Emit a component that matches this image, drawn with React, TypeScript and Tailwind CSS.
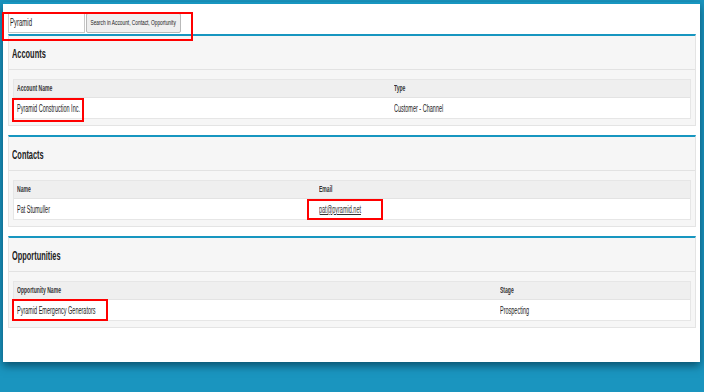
import React from 'react';

type Section = {
  title: string;
  cols: [string, string];
  firstWidth: string;
  row: [string, string];
  link?: boolean;
};

const SECTIONS: Section[] = [
  {
    title: 'Accounts',
    cols: ['Account Name', 'Type'],
    firstWidth: 'w-[377px]',
    row: ['Pyramid Construction Inc.', 'Customer - Channel'],
  },
  {
    title: 'Contacts',
    cols: ['Name', 'Email'],
    firstWidth: 'w-[302px]',
    row: ['Pat Stumuller', 'pat@pyramid.net'],
    link: true,
  },
  {
    title: 'Opportunities',
    cols: ['Opportunity Name', 'Stage'],
    firstWidth: 'w-[483px]',
    row: ['Pyramid Emergency Generators', 'Prospecting'],
  },
];

// the screenshot text is heavily condensed, so squeeze it horizontally
const Narrow: React.FC<{ children: React.ReactNode; className?: string }> = ({ children, className = '' }) => (
  <span className={`inline-block whitespace-nowrap origin-left leading-none ${className}`}>{children}</span>
);

const ResultPanel: React.FC<{ section: Section }> = ({ section }) => (
  <div className="bg-[#f6f6f6] border-t-2 border-[#1796c0] border-x border-b border-x-[#e4e4e4] border-b-[#e4e4e4]">
    <div className="h-[34px] flex items-center pl-[3px] pt-[1px] border-b border-[#e2e2e2]">
      <h3 className="text-[13px] font-bold text-[#222] leading-none">
        <Narrow className="scale-x-[0.57]">{section.title}</Narrow>
      </h3>
    </div>
    <div className="px-[4px] pt-[9px] pb-[6px]">
      <div className="border border-[#e6e6e6] bg-white">
        <div className="flex h-[18px] items-center bg-[#efefef] border-b border-[#e3e3e3] text-[9px] font-bold text-[#333]">
          <div className={`${section.firstWidth} pl-[3px] shrink-0 flex`}>
            <Narrow className="scale-x-[0.56]">{section.cols[0]}</Narrow>
          </div>
          <div className="pl-[3px] flex">
            <Narrow className="scale-x-[0.56]">{section.cols[1]}</Narrow>
          </div>
        </div>
        <div className="flex h-[20px] items-center pt-[1px] text-[10px] text-[#222]">
          <div className={`${section.firstWidth} pl-[3px] shrink-0 flex`}>
            <Narrow className="scale-x-[0.55]">{section.row[0]}</Narrow>
          </div>
          <div className="pl-[3px] flex">
            {section.link ? (
              <Narrow className="scale-x-[0.55] underline text-[#333]">{section.row[1]}</Narrow>
            ) : (
              <Narrow className="scale-x-[0.55]">{section.row[1]}</Narrow>
            )}
          </div>
        </div>
      </div>
    </div>
  </div>
);

export default function App() {
  return (
    <div
      className="w-[704px] h-[392px] bg-[#1a95bf] relative overflow-hidden pl-[3px] pt-[2px]"
      style={{ fontFamily: '"Liberation Sans", Arial, sans-serif' }}
    >
      <div className="w-[697px] h-[360px] bg-white border-t-2 border-[#1796c0] shadow-[0_4px_8px_rgba(0,40,60,0.6)] pl-[5px] pr-[4px] pt-[9px]">
        {/* search bar */}
        <div className="flex h-[20px] items-stretch">
          <div className="w-[77px] border border-[#c8c8c8] bg-white text-[10px] text-[#222] pl-[1px] flex items-center overflow-hidden">
            <Narrow className="scale-x-[0.6]">Pyramid</Narrow>
          </div>
          <button className="w-[95px] ml-[1px] border border-[#b9b9b9] bg-[#efefef] rounded-[2px] text-[8px] text-[#222] flex items-center justify-center">
            <span className="inline-block whitespace-nowrap origin-center scale-x-[0.6]">Search in Account, Contact, Opportunity</span>
          </button>
        </div>

        <div className="mt-[1px] flex flex-col gap-[9px]">
          {SECTIONS.map((s) => (
            <ResultPanel key={s.title} section={s} />
          ))}
        </div>
      </div>

      {/* red annotation boxes */}
      <div className="absolute left-[2px] top-[12px] w-[191px] h-[29px] border-2 border-[#ff0000]" />
      <div className="absolute left-[12px] top-[98px] w-[72px] h-[24px] border-2 border-[#ff0000]" />
      <div className="absolute left-[307px] top-[199px] w-[76px] h-[21px] border-2 border-[#ff0000]" />
      <div className="absolute left-[12px] top-[299px] w-[96px] h-[22px] border-2 border-[#ff0000]" />
    </div>
  );
}
